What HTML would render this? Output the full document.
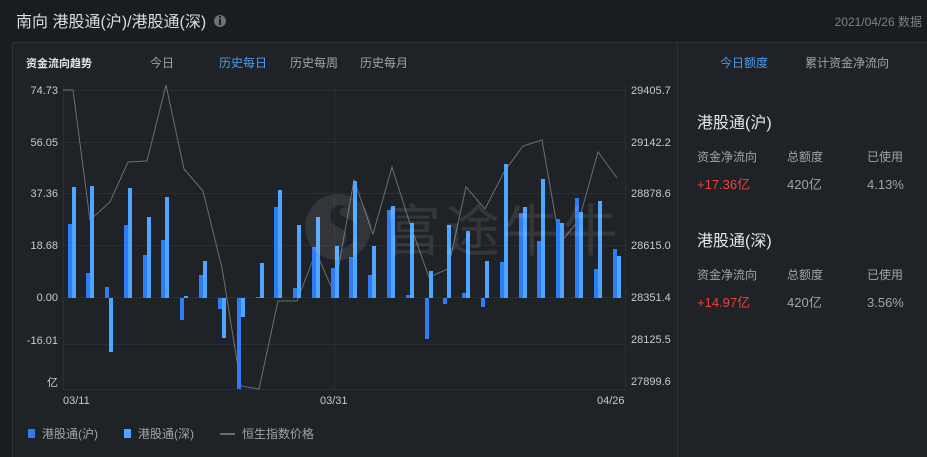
<!DOCTYPE html>
<html><head><meta charset="utf-8"><style>
html,body{margin:0;padding:0;background:#191c20;width:927px;height:457px;overflow:hidden}
svg text{font-family:"Liberation Sans","Noto Sans CJK SC",sans-serif}
</style></head><body>
<svg width="927" height="457" xmlns="http://www.w3.org/2000/svg">
<rect x="0" y="0" width="927" height="457" fill="#191c20"/>
<rect x="12.5" y="42.5" width="920" height="420" fill="#1f2226" stroke="#2e3136"/>
<line x1="677.5" y1="42" x2="677.5" y2="457" stroke="#2e3136"/>
<text x="16" y="27" font-size="16" fill="#dcdcdc">南向 港股通(沪)/港股通(深)</text>
<circle cx="220" cy="21" r="6" fill="#6e7178"/><rect x="219" y="19" width="2" height="6" fill="#1b1e22"/><rect x="219" y="16" width="2" height="2" fill="#1b1e22"/>
<text x="922" y="26" font-size="12" fill="#7d8087" text-anchor="end">2021/04/26 数据</text>
<text x="26" y="67" font-size="11" font-weight="bold" fill="#e6e6e6">资金流向趋势</text>
<text x="150" y="67" font-size="12" fill="#a0a3a8">今日</text>
<text x="219" y="67" font-size="12" fill="#4b9bf0">历史每日</text>
<text x="290" y="67" font-size="12" fill="#a0a3a8">历史每周</text>
<text x="360" y="67" font-size="12" fill="#a0a3a8">历史每月</text>
<g stroke="#2b2e33" stroke-width="1">
<line x1="63" y1="90.5" x2="625" y2="90.5"/><line x1="63" y1="142.5" x2="625" y2="142.5"/>
<line x1="63" y1="193.5" x2="625" y2="193.5"/><line x1="63" y1="245.5" x2="625" y2="245.5"/>
<line x1="63" y1="297.5" x2="625" y2="297.5"/><line x1="63" y1="344.5" x2="625" y2="344.5"/>
<line x1="63" y1="389.5" x2="625" y2="389.5"/>
<line x1="63.5" y1="85" x2="63.5" y2="390"/><line x1="334.5" y1="85" x2="334.5" y2="390"/><line x1="625.5" y1="85" x2="625.5" y2="390"/>
</g>
<g font-size="11" fill="#c8cacd" text-anchor="end">
<text x="58" y="94">74.73</text><text x="58" y="146">56.05</text><text x="58" y="197">37.36</text>
<text x="58" y="249">18.68</text><text x="58" y="301">0.00</text><text x="58" y="344">-16.01</text><text x="58" y="386">亿</text>
</g>
<g font-size="11" fill="#c8cacd">
<text x="631" y="94">29405.7</text><text x="631" y="146">29142.2</text><text x="631" y="197">28878.6</text>
<text x="631" y="249">28615.0</text><text x="631" y="301">28351.4</text><text x="631" y="343">28125.5</text><text x="631" y="385">27899.6</text>
<text x="63" y="404">03/11</text><text x="320" y="404">03/31</text><text x="597" y="404">04/26</text>
</g>
<polyline fill="none" stroke="#6b6e73" stroke-width="1" points="63,90 73,90 90,220 110,202 128,162 147,161 166,85 184,169 203,191 222,268 241,386 259,389 278,301 297,301 316,252 334,293 354,180 373,234 392,167 411,227 429,277 448,269 466,187 485,209 504,172 523,146 542,140 560,243 579,220 598,152 617,178"/>
<g>
<rect x="68" y="224" width="4" height="74" fill="#2f7cf6"/><rect x="72" y="187" width="4" height="111" fill="#4da6ff"/>
<rect x="86" y="273" width="4" height="25" fill="#2f7cf6"/><rect x="90" y="186" width="4" height="112" fill="#4da6ff"/>
<rect x="105" y="287" width="4" height="11" fill="#2f7cf6"/><rect x="109" y="298" width="4" height="54" fill="#4da6ff"/>
<rect x="124" y="225" width="4" height="73" fill="#2f7cf6"/><rect x="128" y="188" width="4" height="110" fill="#4da6ff"/>
<rect x="143" y="255" width="4" height="43" fill="#2f7cf6"/><rect x="147" y="217" width="4" height="81" fill="#4da6ff"/>
<rect x="161" y="240" width="4" height="58" fill="#2f7cf6"/><rect x="165" y="197" width="4" height="101" fill="#4da6ff"/>
<rect x="180" y="298" width="4" height="22" fill="#2f7cf6"/><rect x="184" y="296" width="4" height="2" fill="#4da6ff"/>
<rect x="199" y="275" width="4" height="23" fill="#2f7cf6"/><rect x="203" y="261" width="4" height="37" fill="#4da6ff"/>
<rect x="218" y="298" width="4" height="11" fill="#2f7cf6"/><rect x="222" y="298" width="4" height="40" fill="#4da6ff"/>
<rect x="237" y="298" width="4" height="91" fill="#2f7cf6"/><rect x="241" y="298" width="4" height="19" fill="#4da6ff"/>
<rect x="256" y="297" width="4" height="1" fill="#2f7cf6"/><rect x="260" y="263" width="4" height="35" fill="#4da6ff"/>
<rect x="274" y="207" width="4" height="91" fill="#2f7cf6"/><rect x="278" y="190" width="4" height="108" fill="#4da6ff"/>
<rect x="293" y="288" width="4" height="10" fill="#2f7cf6"/><rect x="297" y="225" width="4" height="73" fill="#4da6ff"/>
<rect x="312" y="247" width="4" height="51" fill="#2f7cf6"/><rect x="316" y="217" width="4" height="81" fill="#4da6ff"/>
<rect x="331" y="268" width="4" height="30" fill="#2f7cf6"/><rect x="335" y="246" width="4" height="52" fill="#4da6ff"/>
<rect x="349" y="257" width="4" height="41" fill="#2f7cf6"/><rect x="353" y="181" width="4" height="117" fill="#4da6ff"/>
<rect x="368" y="275" width="4" height="23" fill="#2f7cf6"/><rect x="372" y="246" width="4" height="52" fill="#4da6ff"/>
<rect x="387" y="210" width="4" height="88" fill="#2f7cf6"/><rect x="391" y="206" width="4" height="92" fill="#4da6ff"/>
<rect x="406" y="295" width="4" height="3" fill="#2f7cf6"/><rect x="410" y="223" width="4" height="75" fill="#4da6ff"/>
<rect x="425" y="298" width="4" height="41" fill="#2f7cf6"/><rect x="429" y="271" width="4" height="27" fill="#4da6ff"/>
<rect x="443" y="298" width="4" height="6" fill="#2f7cf6"/><rect x="447" y="225" width="4" height="73" fill="#4da6ff"/>
<rect x="462" y="293" width="4" height="5" fill="#2f7cf6"/><rect x="466" y="231" width="4" height="67" fill="#4da6ff"/>
<rect x="481" y="298" width="4" height="9" fill="#2f7cf6"/><rect x="485" y="261" width="4" height="37" fill="#4da6ff"/>
<rect x="500" y="262" width="4" height="36" fill="#2f7cf6"/><rect x="504" y="164" width="4" height="134" fill="#4da6ff"/>
<rect x="519" y="213" width="4" height="85" fill="#2f7cf6"/><rect x="523" y="207" width="4" height="91" fill="#4da6ff"/>
<rect x="537" y="241" width="4" height="57" fill="#2f7cf6"/><rect x="541" y="179" width="4" height="119" fill="#4da6ff"/>
<rect x="556" y="219" width="4" height="79" fill="#2f7cf6"/><rect x="560" y="223" width="4" height="75" fill="#4da6ff"/>
<rect x="575" y="198" width="4" height="100" fill="#2f7cf6"/><rect x="579" y="212" width="4" height="86" fill="#4da6ff"/>
<rect x="594" y="269" width="4" height="29" fill="#2f7cf6"/><rect x="598" y="201" width="4" height="97" fill="#4da6ff"/>
<rect x="613" y="249" width="4" height="49" fill="#2f7cf6"/><rect x="617" y="256" width="4" height="42" fill="#4da6ff"/>
</g>
<g opacity="0.09" fill="#ffffff">
<path d="M338 194 A33 33 0 1 0 338 260 A33 33 0 1 0 338 194 Z M340 205 C326 208 328 224 340 228 C350 232 348 246 336 250 C360 248 362 222 346 218 C336 214 338 208 348 206 Z" fill-rule="evenodd"/>
<text x="385" y="251" font-size="56" letter-spacing="3">富途牛牛</text>
</g>
<rect x="28" y="429" width="7" height="9" fill="#2f7cf6"/>
<text x="42" y="438" font-size="12" fill="#a0a3a8">港股通(沪)</text>
<rect x="124" y="429" width="7" height="9" fill="#4da6ff"/>
<text x="138" y="438" font-size="12" fill="#a0a3a8">港股通(深)</text>
<rect x="220" y="433" width="15" height="2" fill="#6b6e73"/>
<text x="242" y="438" font-size="12" fill="#a0a3a8">恒生指数价格</text>
<text x="720" y="67" font-size="12" fill="#4b9bf0">今日额度</text>
<text x="805" y="67" font-size="12" fill="#a0a3a8">累计资金净流向</text>
<text x="697" y="128" font-size="16" fill="#e6e6e6">港股通(沪)</text>
<g font-size="12" fill="#a0a3a8"><text x="697" y="161">资金净流向</text><text x="787" y="161">总额度</text><text x="867" y="161">已使用</text></g>
<text x="697" y="189" font-size="13" fill="#f0413e">+17.36亿</text>
<text x="787" y="189" font-size="13" fill="#a0a3a8">420亿</text><text x="867" y="189" font-size="13" fill="#a0a3a8">4.13%</text>
<text x="697" y="246" font-size="16" fill="#e6e6e6">港股通(深)</text>
<g font-size="12" fill="#a0a3a8"><text x="697" y="279">资金净流向</text><text x="787" y="279">总额度</text><text x="867" y="279">已使用</text></g>
<text x="697" y="307" font-size="13" fill="#f0413e">+14.97亿</text>
<text x="787" y="307" font-size="13" fill="#a0a3a8">420亿</text><text x="867" y="307" font-size="13" fill="#a0a3a8">3.56%</text>
</svg>
</body></html>
